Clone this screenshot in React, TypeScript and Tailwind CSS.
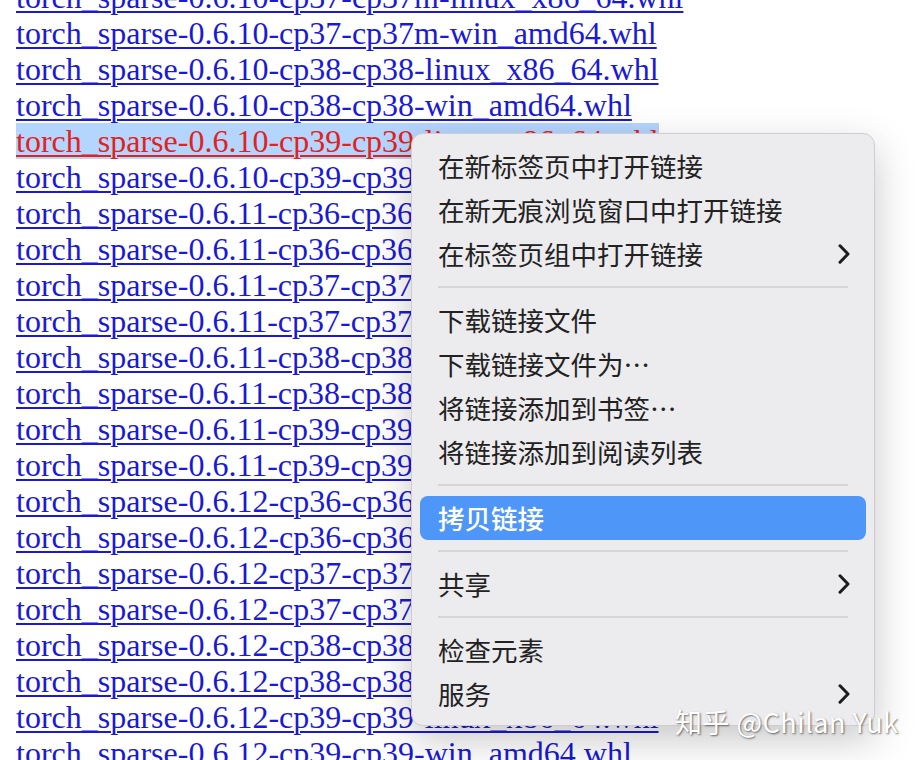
const files = [
  'torch_sparse-0.6.10-cp37-cp37m-linux_x86_64.whl',
  'torch_sparse-0.6.10-cp37-cp37m-win_amd64.whl',
  'torch_sparse-0.6.10-cp38-cp38-linux_x86_64.whl',
  'torch_sparse-0.6.10-cp38-cp38-win_amd64.whl',
  'torch_sparse-0.6.10-cp39-cp39-linux_x86_64.whl',
  'torch_sparse-0.6.10-cp39-cp39-win_amd64.whl',
  'torch_sparse-0.6.11-cp36-cp36m-linux_x86_64.whl',
  'torch_sparse-0.6.11-cp36-cp36m-win_amd64.whl',
  'torch_sparse-0.6.11-cp37-cp37m-linux_x86_64.whl',
  'torch_sparse-0.6.11-cp37-cp37m-win_amd64.whl',
  'torch_sparse-0.6.11-cp38-cp38-linux_x86_64.whl',
  'torch_sparse-0.6.11-cp38-cp38-win_amd64.whl',
  'torch_sparse-0.6.11-cp39-cp39-linux_x86_64.whl',
  'torch_sparse-0.6.11-cp39-cp39-win_amd64.whl',
  'torch_sparse-0.6.12-cp36-cp36m-linux_x86_64.whl',
  'torch_sparse-0.6.12-cp36-cp36m-win_amd64.whl',
  'torch_sparse-0.6.12-cp37-cp37m-linux_x86_64.whl',
  'torch_sparse-0.6.12-cp37-cp37m-win_amd64.whl',
  'torch_sparse-0.6.12-cp38-cp38-linux_x86_64.whl',
  'torch_sparse-0.6.12-cp38-cp38-win_amd64.whl',
  'torch_sparse-0.6.12-cp39-cp39-linux_x86_64.whl',
  'torch_sparse-0.6.12-cp39-cp39-win_amd64.whl',
]

type MenuEntry =
  | { kind: 'item'; label: string; submenu?: boolean; active?: boolean }
  | { kind: 'sep' }

const menu: MenuEntry[] = [
  { kind: 'item', label: '在新标签页中打开链接' },
  { kind: 'item', label: '在新无痕浏览窗口中打开链接' },
  { kind: 'item', label: '在标签页组中打开链接', submenu: true },
  { kind: 'sep' },
  { kind: 'item', label: '下载链接文件' },
  { kind: 'item', label: '下载链接文件为…' },
  { kind: 'item', label: '将链接添加到书签…' },
  { kind: 'item', label: '将链接添加到阅读列表' },
  { kind: 'sep' },
  { kind: 'item', label: '拷贝链接', active: true },
  { kind: 'sep' },
  { kind: 'item', label: '共享', submenu: true },
  { kind: 'sep' },
  { kind: 'item', label: '检查元素' },
  { kind: 'item', label: '服务', submenu: true },
]

function Chevron() {
  return (
    <svg width="14" height="20" viewBox="0 0 14 20" fill="none" className="text-[#1c1c1c]">
      <path d="M3 1.8 L11 10 L3 18.2" stroke="currentColor" strokeWidth="3" strokeLinecap="round" strokeLinejoin="round" />
    </svg>
  )
}

function ContextMenu() {
  return (
    <div className="absolute left-[411px] top-[133px] w-[464px] rounded-[12px] border border-[#cfcdd0] bg-[#ecebed] pt-[10px] pb-[9px] shadow-[0_14px_40px_rgba(0,0,0,0.22)] font-['Noto_Sans_CJK_SC','Noto_Sans',sans-serif]">
      {menu.map((entry, i) =>
        entry.kind === 'sep' ? (
          <div key={i} className="mx-[26px] my-[10px] h-[2px] bg-[#d7d5d8]" />
        ) : (
          <div
            key={i}
            className={`mx-[8px] flex h-[44px] items-center justify-between rounded-[8px] pl-[18px] pr-[15px] text-[26.5px] leading-none ${
              entry.active ? 'bg-[#4e96f7] font-medium text-white' : 'text-[#222222]'
            }`}
          >
            <span>{entry.label}</span>
            {entry.submenu && <Chevron />}
          </div>
        )
      )}
    </div>
  )
}

export default function App() {
  return (
    <div className="relative h-[760px] w-[922px] overflow-hidden bg-white">
      <div className="-mt-[21px] flex flex-col pl-[16px] font-['Liberation_Serif','Times_New_Roman',serif] text-[32px] leading-[36px]">
        {files.map((name, i) => (
          <div key={name} className="flex h-[36px]">
            <a
              href="#"
              className={`inline-block h-[36px] underline decoration-[1.5px] underline-offset-[3px] ${
                i === 4 ? 'bg-[#b4d5fe] text-[#e3221b]' : 'text-[#1a1ad4]'
              }`}
            >
              {name}
            </a>
          </div>
        ))}
      </div>

      <ContextMenu />

      <div className="absolute left-[675px] top-[702px] text-[27px] tracking-[0.5px] text-white [text-shadow:1px_1px_2px_rgba(0,0,0,0.55)] font-['Noto_Sans_CJK_SC','Noto_Sans',sans-serif]">
        知乎 @Chilan Yuk
      </div>
    </div>
  )
}
